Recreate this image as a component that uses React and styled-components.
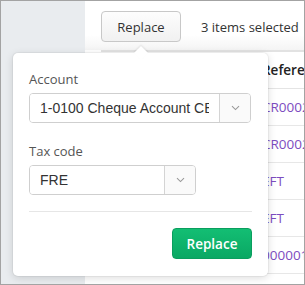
import React from "react";
import styled, { createGlobalStyle } from "styled-components";

const GlobalStyle = createGlobalStyle`
  html, body { margin: 0; padding: 0; background: #fff; }
  body { font-family: "Segoe UI", "Open Sans", sans-serif; }
`;

const rows = ["CR0002", "CR0002", "EFT", "EFT", "000001"];

function Chevron() {
  return (
    <svg width="9" height="6" viewBox="0 0 9 6">
      <path d="M1 1.2 L4.5 4.6 L8 1.2" fill="none" stroke="#9a9a9a" strokeWidth="1.1" />
    </svg>
  );
}

function Select({ value, width }) {
  return (
    <SelectBox width={width}>
      <SelectValue value={value} readOnly />
      <SelectToggle>
        <Chevron />
      </SelectToggle>
    </SelectBox>
  );
}

export default function App() {
  return (
    <Frame>
      <GlobalStyle />
      <Sidebar />
      <Main>
        <Toolbar>
          <GhostButton>Replace</GhostButton>
          <Selected>3 items selected</Selected>
        </Toolbar>
        <Table>
          <HeaderRow>
            <Cell bold>Reference</Cell>
          </HeaderRow>
          {rows.map((r, i) => (
            <Row key={i}>
              <Cell>{r}</Cell>
            </Row>
          ))}
        </Table>
      </Main>

      <Popover>
        <Arrow />
        <Label>Account</Label>
        <Select value="1-0100 Cheque Account CBA" width={222} />
        <Label top={18}>Tax code</Label>
        <Select value="FRE" width={167} />
        <Divider />
        <Footer>
          <PrimaryButton>Replace</PrimaryButton>
        </Footer>
      </Popover>
    </Frame>
  );
}

const Frame = styled.div`
  position: relative;
  width: 305px;
  height: 285px;
  box-sizing: border-box;
  border: 1px solid #a3a3a3;
  display: flex;
  overflow: hidden;
`;

const Sidebar = styled.aside`
  width: 84px;
  flex: none;
  background: #e9ecef;
`;

const Main = styled.section`
  flex: 1;
  padding-left: 16px;
  display: flex;
  flex-direction: column;
  min-width: 0;
`;

const Toolbar = styled.div`
  display: flex;
  align-items: center;
  gap: 20px;
  padding-top: 10px;
  height: 31px;
  padding-bottom: 8px;
  background: linear-gradient(#fff 0, #fff 34px, #f4f4f4 100%);
  margin-left: -16px;
  padding-left: 16px;
`;

const GhostButton = styled.button`
  width: 80px;
  height: 31px;
  box-sizing: border-box;
  border: 1px solid #c8c8c8;
  border-radius: 4px;
  background: linear-gradient(#fdfdfd, #f1f1f1);
  font-family: "Segoe UI", "Open Sans", sans-serif;
  font-size: 13px;
  color: #333;
  padding: 0;
`;

const Selected = styled.span`
  font-size: 13px;
  color: #333;
  white-space: nowrap;
`;

const Table = styled.div`
  border-top: 2px solid #e2e2e2;
  display: flex;
  flex-direction: column;
`;

const HeaderRow = styled.div`
  height: 36px;
  display: flex;
  align-items: center;
  border-bottom: 1px solid #e4e4e4;
`;

const Row = styled.div`
  height: 36px;
  display: flex;
  align-items: center;
  border-bottom: 1px solid #e7e7e7;
`;

const Cell = styled.div`
  padding-left: 161px;
  font-size: 13.5px;
  white-space: nowrap;
  font-weight: ${(p) => (p.bold ? 600 : 400)};
  color: ${(p) => (p.bold ? "#222" : "#7d4cc0")};
`;

const Popover = styled.div`
  position: absolute;
  left: 12px;
  top: 52px;
  width: 255px;
  height: 223px;
  box-sizing: border-box;
  padding: 16px 16px 15px;
  background: #fff;
  border-radius: 5px;
  box-shadow: 0 0 0 1px rgba(0, 0, 0, 0.04), 0 2px 8px rgba(0, 0, 0, 0.14);
  display: flex;
  flex-direction: column;
`;

const Arrow = styled.div`
  position: absolute;
  top: -5px;
  left: 123px;
  width: 10px;
  height: 10px;
  background: #fff;
  transform: rotate(45deg);
  box-shadow: -1px -1px 2px rgba(0, 0, 0, 0.08);
`;

const Label = styled.div`
  font-size: 13px;
  line-height: 20px;
  color: #555;
  margin-top: ${(p) => p.top || 0}px;
  margin-bottom: 4px;
`;

const SelectBox = styled.div`
  width: ${(p) => p.width}px;
  height: 30px;
  box-sizing: border-box;
  border: 1px solid #cfcfcf;
  border-radius: 4px;
  display: flex;
  overflow: hidden;
`;

const SelectValue = styled.input`
  flex: 1;
  min-width: 0;
  border: none;
  outline: none;
  padding: 0 10px;
  font-family: "Liberation Sans", Arial, sans-serif;
  font-size: 14px;
  color: #333;
  background: #fff;
`;

const SelectToggle = styled.div`
  width: 30px;
  flex: none;
  border-left: 1px solid #d4d4d4;
  background: #fafafa;
  display: flex;
  align-items: center;
  justify-content: center;
`;

const Divider = styled.hr`
  border: none;
  border-top: 1px solid #e6e6e6;
  margin: 16px 0 16px;
  width: 100%;
`;

const Footer = styled.div`
  display: flex;
  justify-content: flex-end;
`;

const PrimaryButton = styled.button`
  width: 80px;
  height: 31px;
  box-sizing: border-box;
  border: 1px solid #0a9e5e;
  border-radius: 4px;
  background: linear-gradient(#13be73, #0aa864);
  color: #fff;
  font-family: "Segoe UI", "Open Sans", sans-serif;
  font-size: 13.5px;
  font-weight: 600;
  padding: 0;
`;
